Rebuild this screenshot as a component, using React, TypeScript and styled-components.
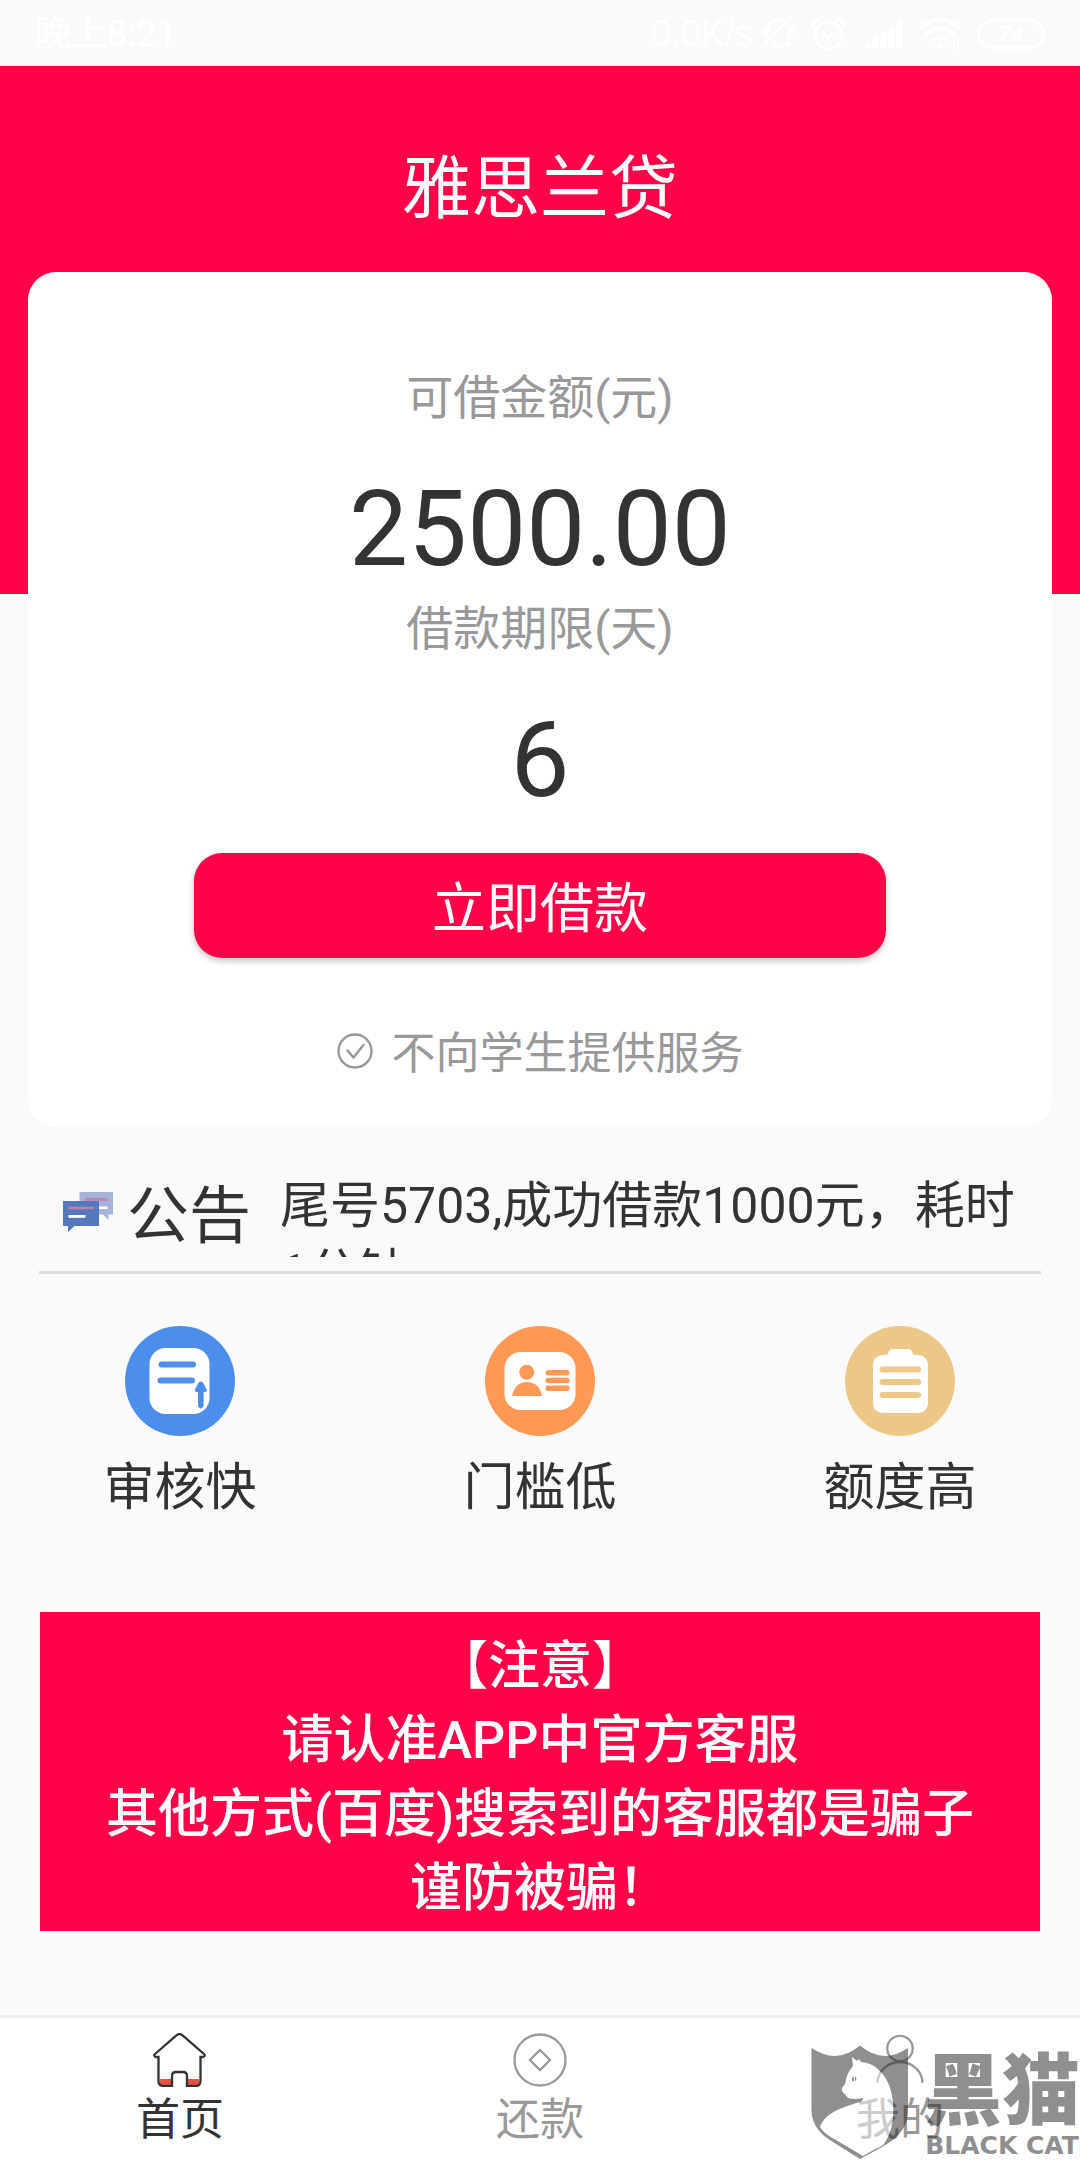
import React from "react";
import styled, { createGlobalStyle } from "styled-components";

const color = {
  brand: "#ff0349",
  page: "#fafafa",
  surface: "#ffffff",
  ink: "#333333",
  muted: "#999999",
  rule: "#dddddd",
  navRule: "#eeeeee",
};

const GlobalStyle = createGlobalStyle`
  *, *::before, *::after { box-sizing: border-box; }
  body {
    margin: 0;
    background: ${color.page};
    color: ${color.ink};
    font-family: Roboto, "Noto Sans CJK SC", sans-serif;
  }
  h1, h2, p, ul { margin: 0; padding: 0; font-weight: 400; }
  svg { display: block; flex: none; }
`;

const Page = styled.div`
  position: relative;
  display: flex;
  flex-direction: column;
  min-height: 100vh;
  overflow: hidden;
`;

const StatusBar = styled.div`
  display: flex;
  align-items: center;
  justify-content: space-between;
  height: 66px;
  padding: 2px 35px 0;
  color: ${color.surface};
`;

const Clock = styled.span`
  font-size: 36px;
  line-height: 40px;
`;

const StatusIcons = styled.div`
  display: flex;
  align-items: center;
  gap: 16px;
`;

const Speed = styled.span`
  margin-right: -8px;
  font-family: "Liberation Sans", sans-serif;
  font-size: 36px;
  line-height: 40px;
`;

const Battery = styled.span`
  width: 68px;
  height: 30px;
  border: 3px solid;
  border-radius: 15px;
  font: italic 700 22px/24px "Liberation Sans", sans-serif;
  text-align: center;
`;

const Hero = styled.header`
  padding: 92px 0 372px;
  background: ${color.brand};
`;

const Title = styled.h1`
  color: ${color.surface};
  font-size: 69px;
  line-height: 64px;
  text-align: center;
`;

const Card = styled.section`
  display: flex;
  flex-direction: column;
  align-items: center;
  margin: -322px 28px 0;
  padding: 94px 24px 45px;
  border-radius: 28px;
  background: ${color.surface};
`;

const Label = styled.p`
  color: ${color.muted};
  font-size: 47px;
  line-height: 64px;
`;

const Figure = styled.p`
  margin-top: 32px;
  font-size: 105px;
  line-height: 135px;
`;

const BorrowButton = styled.button`
  width: 71%;
  margin-top: 25px;
  padding: 23px 0 14px;
  border: 0;
  border-radius: 28px;
  background: ${color.brand};
  box-shadow: 0 3px 6px rgba(0, 0, 0, 0.24);
  color: ${color.surface};
  font: inherit;
  font-size: 54px;
  line-height: 68px;
`;

const Assurance = styled.p`
  display: flex;
  align-items: center;
  gap: 19px;
  margin-top: 68px;
  color: ${color.muted};
  font-size: 44px;
  line-height: 56px;

  svg { margin-bottom: 6px; }
`;

const Bulletin = styled.section`
  display: flex;
  align-items: center;
  margin: 46px 39px 0;
  padding: 0 24px 14px;
  border-bottom: 3px solid ${color.rule};
`;

const BulletinTitle = styled.h2`
  margin: 0 29px 0 14px;
  padding-top: 4px;
  font-size: 62px;
  line-height: 80px;
  white-space: nowrap;
`;

const BulletinText = styled.p`
  flex: 1;
  height: 84px;
  overflow: hidden;
  font-size: 50px;
  line-height: 67px;
`;

const Features = styled.ul`
  display: grid;
  grid-template-columns: repeat(3, 1fr);
  padding: 52px 0 0;
  list-style: none;
`;

const Feature = styled.li`
  display: flex;
  flex-direction: column;
  align-items: center;
  gap: 22px;
  font-size: 51px;
  line-height: 60px;
`;

const Notice = styled.section`
  margin: 94px 40px 84px;
  padding: 18px 16px 5px;
  background: ${color.brand};
  color: ${color.surface};
  font-size: 52px;
  line-height: 74px;
  text-align: center;

  p { font-weight: 500; }
`;

const TabBar = styled.nav`
  display: grid;
  grid-template-columns: repeat(3, 1fr);
  margin-top: auto;
  border-top: 3px solid ${color.navRule};
  background: ${color.surface};
`;

const Tab = styled.a<{ $active?: boolean }>`
  display: flex;
  flex-direction: column;
  align-items: center;
  gap: 5px;
  padding: 15px 0 12px;
  color: ${(p) => (p.$active ? color.ink : color.muted)};
  font-size: 44px;
  line-height: 56px;
  text-decoration: none;
`;

const Watermark = styled.div`
  position: absolute;
  right: 0;
  bottom: 0;
  display: flex;
  gap: 15px;
  color: #231f20;
  opacity: 0.5;
  pointer-events: none;
`;

const Wordmark = styled.div`
  display: flex;
  flex-direction: column;
  align-items: center;
`;

const WordmarkName = styled.span`
  padding-top: 8px;
  font-size: 78px;
  font-weight: 900;
  line-height: 80px;
`;

const WordmarkLatin = styled.span`
  font: 700 25px/26px "DejaVu Sans", sans-serif;
  white-space: nowrap;
`;

const MutedBell = () => (
  <svg width="34" height="34" viewBox="0 0 34 34" fill="none" stroke="currentColor" strokeWidth="2.6">
    <path d="M7 22V12a10 10 0 0 1 17-7M28 12v15H12M2 28 29 1M1 11v6M4 9v10M33 11v6M30 9v10" />
    <path d="M12 29h10q-5 6-10 0z" fill="currentColor" stroke="none" />
  </svg>
);

const Alarm = () => (
  <svg width="35" height="34" viewBox="0 0 35 34" fill="none" stroke="currentColor" strokeWidth="2.8">
    <circle cx="17.500" cy="18.500" r="13.500" />
    <path d="m12 15 5.500 5.500L23 15M1 9q3-5 9-8M34 9q-3-5-9-8" />
  </svg>
);

const Signal = () => (
  <svg width="41" height="30" viewBox="0 0 41 30" fill="currentColor">
    <path d="M0 29q0-3 8-7v7zM11 20l5-3v12h-5zM19 15l5-3v17h-5zM27 9l5-3v23h-5zM35 3l5-3v29h-5z" />
  </svg>
);

const Wifi = () => (
  <svg width="42" height="34" viewBox="0 0 42 34" fill="none" stroke="currentColor" strokeWidth="4">
    <path d="M1 12q20-19 40 0M7 18q14-13 28 0M13 24q8-7 15 0" />
    <circle cx="20.500" cy="28" r="3" fill="currentColor" stroke="none" />
    <path d="M35 24v9m4-9v9" strokeWidth="2" />
  </svg>
);

const CheckCircle = () => (
  <svg width="36" height="36" viewBox="0 0 36 36" fill="none" stroke="currentColor" strokeWidth="2.4">
    <circle cx="18" cy="18" r="16.500" />
    <path d="m10.500 17.500 6 7L26.500 12" strokeLinecap="round" strokeLinejoin="round" />
  </svg>
);

const Messages = () => (
  <svg width="50" height="46" viewBox="0 0 50 46">
    <path d="M16.500 0H50v22.500h-4.500V28L40 22.500H16.500z" fill="#a6b4d9" />
    <path d="M22 6h22.500v3H22z" fill="#be86b0" />
    <path d="M36 14.500h8.500V17H36z" fill="#fff" />
    <path d="M0 9h36v25H11.500L5 40v-6H0z" fill="#5578bd" />
    <path d="M5.500 14.700h25.500v2.600H5.500z" fill="#be80ae" />
    <path d="M5.500 23h17v2.800h-17z" fill="#fff" />
  </svg>
);

const FastReview = () => (
  <svg width="110" height="110" viewBox="0 0 110 110">
    <circle cx="55" cy="55" r="55" fill="#4c8eec" />
    <rect x="24.500" y="22" width="60" height="66" rx="16" fill="#fff" />
    <g fill="#4c8eec">
      <rect x="33.500" y="35.500" width="37.500" height="6" rx="3" />
      <rect x="32.500" y="51.500" width="37.500" height="6" rx="3" />
      <path d="M73 57.500q2.800-4 5.600 0l3 6q.8 2.500-3 2.800V80q-2.800 5-5.600 0V66.300q-3.800-.3-3-2.800z" />
    </g>
  </svg>
);

const LowThreshold = () => (
  <svg width="110" height="110" viewBox="0 0 110 110">
    <circle cx="55" cy="55" r="55" fill="#ff9955" />
    <rect x="19.500" y="26" width="71" height="58" rx="16" fill="#fff" />
    <g fill="#ff9955">
      <circle cx="41.700" cy="46.300" r="7.500" />
      <path d="M27 70q3-14 15-14t15 14z" />
      <rect x="60.500" y="44" width="24" height="5.500" rx="2.700" />
      <rect x="60.500" y="51.700" width="24" height="5.500" rx="2.700" />
      <rect x="60.500" y="59.400" width="24" height="5.500" rx="2.700" />
    </g>
  </svg>
);

const HighLimit = () => (
  <svg width="110" height="110" viewBox="0 0 110 110">
    <circle cx="55" cy="55" r="55" fill="#ecc788" />
    <path
      d="M39 29q4 0 4-2 1-4 5-4h14.500q4 0 5 4 0 2 4 2 11.500 0 11.500 11v36q0 11-11 11H39q-11 0-11-11V40q0-11 11-11z"
      fill="#fff"
    />
    <g fill="#ecc788">
      <rect x="34.500" y="40.500" width="41.500" height="6" rx="3" />
      <rect x="34.500" y="53" width="41.500" height="6" rx="3" />
      <rect x="34.500" y="66" width="41.500" height="6" rx="3" />
    </g>
  </svg>
);

const HomeIcon = () => (
  <svg width="54" height="54" viewBox="0 0 54 54">
    <path d="M7 46h12v7H7zM34 46h12v7H34z" fill="#f05042" />
    <path
      d="M5.500 24v24q0 5 5 5h8.500V43q0-4 4-4h7q4 0 4 4v10h8.500q5 0 5-5V24h2.500q3-1 1-3L29 2q-2.500-2-5 0L2 21q-2 2 1 3z"
      fill="none"
      stroke="#333"
      strokeWidth="2.300"
    />
  </svg>
);

const CoinIcon = () => (
  <svg width="54" height="54" viewBox="0 0 54 54" fill="none" stroke="currentColor" strokeWidth="2.300">
    <circle cx="27" cy="27" r="25.500" />
    <path d="m27 17 10 10-10 10-10-10z" />
  </svg>
);

const MeIcon = () => (
  <svg width="54" height="54" viewBox="0 0 54 54" fill="none" stroke="currentColor" strokeWidth="2.300">
    <circle cx="27" cy="15.500" r="12.700" />
    <path d="M4.500 50a22.500 21 0 0 1 45 0" />
  </svg>
);

const CatShield = () => (
  <svg width="98" height="115" viewBox="0 0 98 115">
    <path
      d="M.5 3Q26 20 49 .5 72 20 97 3v62c0 22-16 31-26 37l-22 12-27-17C10 90 .5 80 .5 65z"
      fill="#231f20"
    />
    <path
      d="M9 82c5-14 20-19 40-25q3-1 3-4-9 2-15 0l-6-7q-1-3 3-7 2-12 8-18l-1-9 5 4 2-2 2 3c14 1 23 11 28 23 7 18 5 42-2 54-3 6-6 8-10 9l-14 8-27-16Q13 89 9 82z"
      fill="#fff"
    />
    <path d="m41 33 2-1.500v5q-3-.5-2-3.500zM44 31.500q3 2 0 5z" fill="#231f20" />
  </svg>
);

const features = [
  { name: "审核快", Icon: FastReview },
  { name: "门槛低", Icon: LowThreshold },
  { name: "额度高", Icon: HighLimit },
];

const tabs = [
  { name: "首页", Icon: HomeIcon, active: true },
  { name: "还款", Icon: CoinIcon, active: false },
  { name: "我的", Icon: MeIcon, active: false },
];

export default function App() {
  return (
    <Page lang="zh-CN">
      <GlobalStyle />
      <StatusBar>
        <Clock>晚上8:21</Clock>
        <StatusIcons>
          <Speed>0.0K/s</Speed>
          <MutedBell />
          <Alarm />
          <Signal />
          <Wifi />
          <Battery>74</Battery>
        </StatusIcons>
      </StatusBar>

      <Hero>
        <Title>雅思兰贷</Title>
      </Hero>

      <Card>
        <Label>可借金额(元)</Label>
        <Figure>2500.00</Figure>
        <Label>借款期限(天)</Label>
        <Figure>6</Figure>
        <BorrowButton type="button">立即借款</BorrowButton>
        <Assurance>
          <CheckCircle />
          不向学生提供服务
        </Assurance>
      </Card>

      <Bulletin>
        <Messages />
        <BulletinTitle>公告</BulletinTitle>
        <BulletinText>尾号5703,成功借款1000元，耗时1分钟</BulletinText>
      </Bulletin>

      <Features>
        {features.map(({ name, Icon }) => (
          <Feature key={name}>
            <Icon />
            {name}
          </Feature>
        ))}
      </Features>

      <Notice>
        <p>【注意】</p>
        <p>请认准APP中官方客服</p>
        <p>其他方式(百度)搜索到的客服都是骗子</p>
        <p>谨防被骗！</p>
      </Notice>

      <TabBar>
        {tabs.map(({ name, Icon, active }) => (
          <Tab key={name} href="#" $active={active} aria-current={active ? "page" : undefined}>
            <Icon />
            {name}
          </Tab>
        ))}
      </TabBar>

      <Watermark>
        <CatShield />
        <Wordmark>
          <WordmarkName>黑猫</WordmarkName>
          <WordmarkLatin>BLACK CAT</WordmarkLatin>
        </Wordmark>
      </Watermark>
    </Page>
  );
}
